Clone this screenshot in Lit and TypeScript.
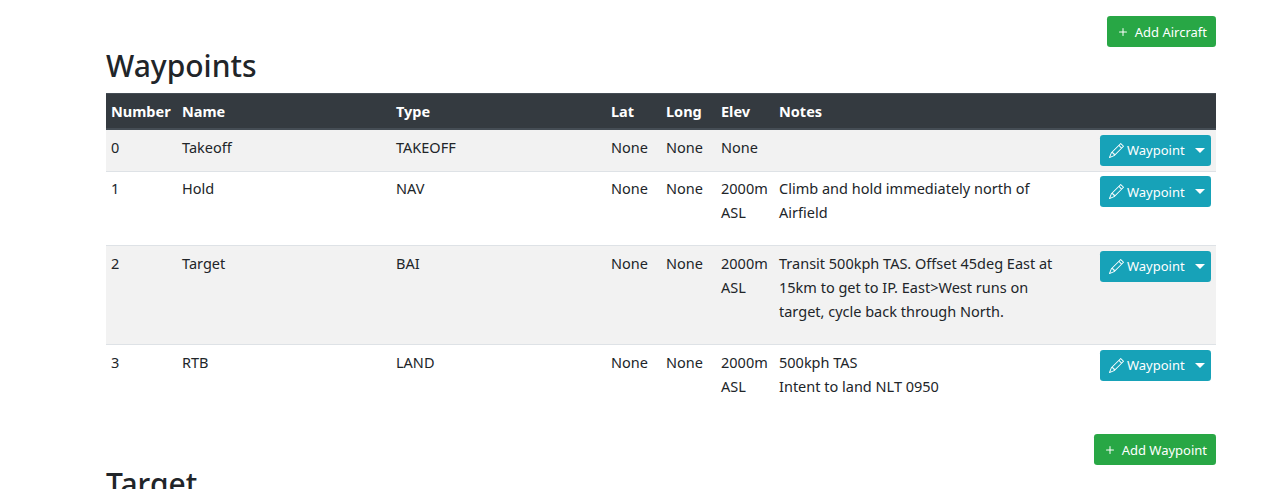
import { LitElement, css, html, svg } from 'lit'
import { customElement } from 'lit/decorators.js'

interface Waypoint {
  number: number;
  name: string;
  type: string;
  elev: string[];
  notes: string[];
}

const WAYPOINTS: Waypoint[] = [
  { number: 0, name: 'Takeoff', type: 'TAKEOFF', elev: ['None'], notes: [] },
  { number: 1, name: 'Hold', type: 'NAV', elev: ['2000m', 'ASL'], notes: ['Climb and hold immediately north of', 'Airfield'] },
  { number: 2, name: 'Target', type: 'BAI', elev: ['2000m', 'ASL'], notes: ['Transit 500kph TAS. Offset 45deg East at', '15km to get to IP. East>West runs on', 'target, cycle back through North.'] },
  { number: 3, name: 'RTB', type: 'LAND', elev: ['2000m', 'ASL'], notes: ['500kph TAS', 'Intent to land NLT 0950'] },
]

const plusIcon = svg`<path d="M8 4a.5.5 0 0 1 .5.5v3h3a.5.5 0 0 1 0 1h-3v3a.5.5 0 0 1-1 0v-3h-3a.5.5 0 0 1 0-1h3v-3A.5.5 0 0 1 8 4z"/>`
const pencilIcon = svg`<path d="M12.146.146a.5.5 0 0 1 .708 0l3 3a.5.5 0 0 1 0 .708l-10 10a.5.5 0 0 1-.168.11l-5 2a.5.5 0 0 1-.65-.65l2-5a.5.5 0 0 1 .11-.168l10-10zM11.207 2.5 13.5 4.793 14.793 3.5 12.5 1.207 11.207 2.5zm1.586 3L10.5 3.207 4 9.707V10h.5a.5.5 0 0 1 .5.5v.5h.5a.5.5 0 0 1 .5.5v.5h.293l6.5-6.5zm-9.761 5.175-.106.106-1.528 3.821 3.821-1.528.106-.106A.5.5 0 0 1 5 12.5V12h-.5a.5.5 0 0 1-.5-.5V11h-.5a.5.5 0 0 1-.468-.325z"/>`

@customElement('app-root')
export class AppRoot extends LitElement {
  static styles = css`
    :host {
      display: block;
      height: 489px;
      overflow: hidden;
      font-family: 'Noto Sans', sans-serif;
      font-size: 14.5px;
      line-height: 24px;
      color: #212529;
      background: #fff;
    }

    .page {
      width: 1110px;
      margin-left: 106px;
      padding-top: 16px;
    }

    .actions {
      display: flex;
      justify-content: flex-end;
    }

    h2 {
      margin: 0 0 8px;
      font-size: 30px;
      font-weight: 500;
      line-height: 38.4px;
    }

    .btn {
      display: inline-flex;
      align-items: center;
      height: 31px;
      box-sizing: border-box;
      border-radius: 3.2px;
      font-size: 13px;
      color: #fff;
      white-space: nowrap;
    }

    .btn svg {
      fill: currentColor;
      flex: none;
    }

    .add {
      padding: 0 9px 0 8px;
      background: #28a745;
      gap: 4px;
    }

    .edit {
      width: 111px;
      padding-left: 9px;
      background: #17a2b8;
      gap: 3px;
    }

    .caret {
      margin-left: 7px;
      border-top: 5px solid #fff;
      border-left: 5px solid transparent;
      border-right: 5px solid transparent;
    }

    table {
      width: 100%;
      table-layout: fixed;
      border-collapse: collapse;
      margin-bottom: 16px;
    }

    th, td {
      padding: 4.8px 5px;
      text-align: left;
      vertical-align: top;
      border-top: 1px solid #dee2e6;
    }

    th {
      color: #fff;
      background: #343a40;
      font-weight: 700;
      border-top-color: #454d55;
      border-bottom: 2px solid #454d55;
    }

    tbody tr:nth-child(odd) {
      background: #f2f2f2;
    }

    tbody tr:first-child td {
      border-top: 0;
    }

    .c-number { width: 71px; }
    .c-name { width: 214px; }
    .c-type { width: 215px; }
    .c-lat { width: 55px; }
    .c-long { width: 55px; }
    .c-elev { width: 58px; }
    .c-notes { width: 316px; }

    .line {
      display: block;
      white-space: nowrap;
    }

    .notes {
      margin: 0 0 16px;
    }

    .tools {
      text-align: right;
      line-height: 0;
    }
  `

  private renderButton(label: string) {
    return html`
      <span class="btn add">
        <svg width="16" height="16" viewBox="0 0 16 16">${plusIcon}</svg>
        ${label}
      </span>
    `
  }

  private renderRow(w: Waypoint) {
    return html`
      <tr>
        <td>${w.number}</td>
        <td>${w.name}</td>
        <td>${w.type}</td>
        <td>None</td>
        <td>None</td>
        <td>${w.elev.map((e) => html`<span class="line">${e}</span>`)}</td>
        <td>
          ${w.notes.length
            ? html`<p class="notes">${w.notes.map((n) => html`<span class="line">${n}</span>`)}</p>`
            : ''}
        </td>
        <td class="tools">
          <span class="btn edit">
            <svg width="15" height="15" viewBox="0 0 16 16">${pencilIcon}</svg>
            Waypoint
            <span class="caret"></span>
          </span>
        </td>
      </tr>
    `
  }

  render() {
    return html`
      <div class="page">
        <div class="actions">${this.renderButton('Add Aircraft')}</div>
        <h2>Waypoints</h2>
        <table>
          <colgroup>
            <col class="c-number" /><col class="c-name" /><col class="c-type" /><col class="c-lat" />
            <col class="c-long" /><col class="c-elev" /><col class="c-notes" /><col />
          </colgroup>
          <thead>
            <tr>
              <th>Number</th><th>Name</th><th>Type</th><th>Lat</th>
              <th>Long</th><th>Elev</th><th>Notes</th><th></th>
            </tr>
          </thead>
          <tbody>${WAYPOINTS.map((w) => this.renderRow(w))}</tbody>
        </table>
        <div class="actions">${this.renderButton('Add Waypoint')}</div>
        <h2 class="next">Target</h2>
      </div>
    `
  }
}
